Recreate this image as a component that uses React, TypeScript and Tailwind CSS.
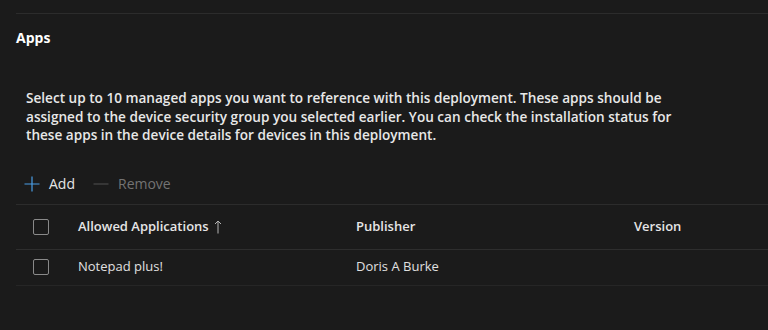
import React from "react";

const font = { fontFamily: '"Open Sans", "Noto Sans", sans-serif' };

function Checkbox() {
  return <div className="w-4 h-4 border border-[#8a8a8a] rounded-[2px]" />;
}

export default function App() {
  return (
    <div className="w-[768px] h-[330px] bg-[#1b1b1b] text-[#e6e6e6] overflow-hidden" style={font}>
      <div className="pl-4 pt-[13px]">
        <div className="h-px bg-[#2c2c2c]" />
        <div className="pt-[15px] text-[14px] font-bold text-white leading-[18px]">Apps</div>
      </div>
      <div className="ml-[26px] pt-[42px] w-[660px] text-[13.6px] font-semibold leading-[18.5px] text-[#e8e8e8]">
        Select up to 10 managed apps you want to reference with this deployment. These apps should be assigned to the
        device security group you selected earlier. You can check the installation status for these apps in the device
        details for devices in this deployment.
      </div>
      <div className="pl-4 mt-[19px]">
        <div className="flex items-center h-[40px] pl-2 text-[14px]">
          <svg width="16" height="16" viewBox="0 0 16 16" className="mr-[9px]">
            <path d="M8 0.5V15.5M0.5 8H15.5" stroke="#4a9ee6" strokeWidth="1.2" />
          </svg>
          <span className="text-[#e6e6e6]">Add</span>
          <svg width="16" height="16" viewBox="0 0 16 16" className="ml-[18px] mr-[9px]">
            <path d="M0.5 8H15.5" stroke="#4a4a4a" strokeWidth="1.2" />
          </svg>
          <span className="text-[#737373]">Remove</span>
        </div>
        <div className="h-px bg-[#2c2c2c]" />
        <div className="flex items-center h-[45px] text-[13px] font-semibold text-[#e6e6e6] border-b border-[#2e2e2e]">
          <div className="w-[62px] pl-[17px]"><Checkbox /></div>
          <div className="w-[278px] flex items-center">
            Allowed Applications
            <svg width="8" height="14" viewBox="0 0 8 14" className="ml-[5px]">
              <path d="M4 1V13.5M1 4L4 1L7 4" stroke="#b5b5b5" strokeWidth="1" fill="none" />
            </svg>
          </div>
          <div className="w-[278px]">Publisher</div>
          <div>Version</div>
        </div>
        <div className="flex items-center h-[36px] text-[13px] text-[#e0e0e0] border-b border-[#262626]">
          <div className="w-[62px] pl-[17px]"><Checkbox /></div>
          <div className="w-[278px]">Notepad plus!</div>
          <div className="w-[278px]">Doris A Burke</div>
          <div></div>
        </div>
      </div>
    </div>
  );
}
